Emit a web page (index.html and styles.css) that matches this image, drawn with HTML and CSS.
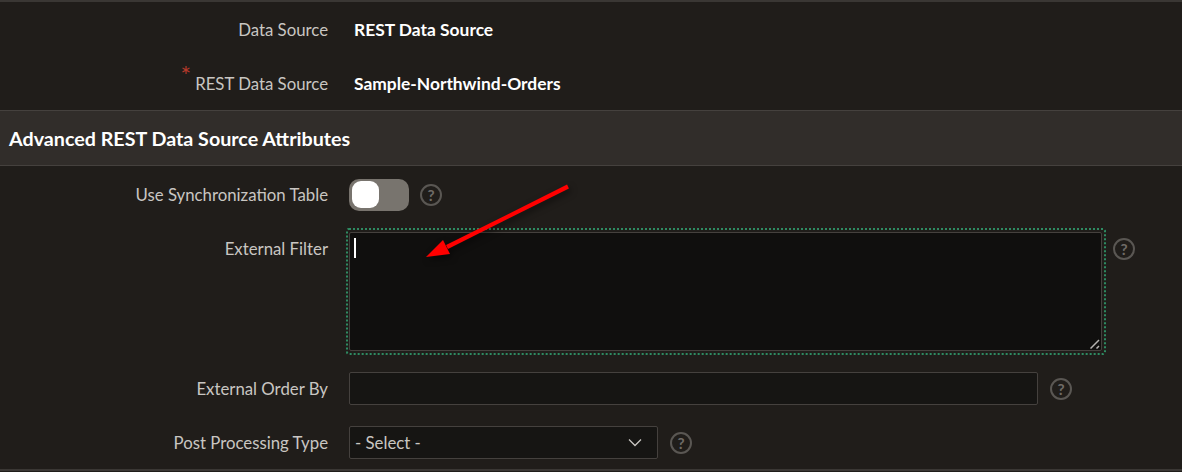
FILE: index.html
```html
<!DOCTYPE html>
<html lang="en">
<head>
<meta charset="utf-8">
<title>REST Data Source</title>
<link rel="stylesheet" href="styles.css">
</head>
<body>
<main class="page">
  <div class="row row-display row-first">
    <label class="label">Data Source</label>
    <div class="value">REST Data Source</div>
  </div>
  <div class="row row-display row-second">
    <label class="label"><span class="req">*</span>REST Data Source</label>
    <div class="value">Sample-Northwind-Orders</div>
  </div>
  <h2 class="section">Advanced REST Data Source Attributes</h2>
  <div class="row row-toggle">
    <label class="label">Use Synchronization Table</label>
    <div class="field">
      <span class="toggle"><span class="knob"></span></span>
      <span class="help">?</span>
    </div>
  </div>
  <div class="row row-area">
    <label class="label label-top">External Filter</label>
    <div class="field field-top">
      <div class="focus">
        <div class="textarea">
          <span class="caret"></span>
          <svg class="grip" width="10" height="10" viewBox="0 0 10 10"><path d="M0.5 9.5L9 1M6.5 9.5L9 7" stroke="#b5b3b0" stroke-width="1.5" fill="none"/></svg>
        </div>
      </div>
      <span class="help help-area">?</span>
    </div>
  </div>
  <div class="row row-order">
    <label class="label">External Order By</label>
    <div class="field">
      <div class="input"></div>
      <span class="help">?</span>
    </div>
  </div>
  <div class="row row-select">
    <label class="label">Post Processing Type</label>
    <div class="field">
      <div class="select">
        <span>- Select -</span>
        <svg width="14" height="9" viewBox="0 0 14 9"><path d="M1 1.5L7 7.5L13 1.5" stroke="#c9c6c2" stroke-width="1.3" fill="none"/></svg>
      </div>
      <span class="help">?</span>
    </div>
  </div>
  <svg class="arrow" width="160" height="90" viewBox="0 0 160 90">
    <path d="M148 6.5L27 67" stroke="#ff0000" stroke-width="4.2" fill="none"/>
    <path d="M6 77L23 60L30 74Z" fill="#ff0000"/>
  </svg>
</main>
</body>
</html>
```
FILE: styles.css
```css
* { box-sizing: border-box; }
html, body { margin: 0; padding: 0; height: 100%; }
body {
  background: #201d1a;
  color: #c9c6c2;
  font-family: Lato, "Noto Sans", sans-serif;
  font-size: 16.8px;
  overflow: hidden;
}
.page {
  position: relative;
  height: 472px;
  border-top: 2px solid #3a3734;
}
.row {
  display: grid;
  grid-template-columns: 328px 1fr;
  column-gap: 21px;
  align-items: center;
}
.row-first { height: 55px; }
.row-second { height: 53px; }
.row-toggle { height: 62px; padding-bottom: 4px; }
.row-area { height: 133px; align-items: start; }
.row-order { height: 54px; padding-top: 1px; }
.row-select {
  height: 56px;
  padding-top: 1px;
  border-bottom: 2px solid #3a3734;
}
.label {
  text-align: right;
  color: #c9c6c2;
  line-height: 20px;
  position: relative;
}
.label-top { padding-top: 11px; }
.req {
  color: #b5392a;
  font-size: 25px;
  line-height: 0;
  position: relative;
  top: -5px;
  margin-right: 4px;
}
.value {
  color: #fff;
  font-size: 17.4px;
  font-weight: 700;
  padding-left: 5px;
}
.section {
  margin: 0;
  height: 56px;
  padding: 1px 9px 0;
  display: flex;
  align-items: center;
  background: #312d2a;
  border-top: 1px solid #45413e;
  border-bottom: 1px solid #45413e;
  color: #fff;
  font-size: 19.7px;
  font-weight: 700;
}
.field {
  display: flex;
  align-items: center;
}
.field-top { align-items: flex-start; }
.toggle {
  width: 60px;
  height: 32px;
  border-radius: 10px;
  background: #78746e;
  padding: 2px 3px;
  margin-right: 11px;
  display: block;
}
.knob {
  display: block;
  width: 27px;
  height: 27px;
  border-radius: 9px;
  background: #fff;
}
.help {
  width: 22px;
  height: 22px;
  border: 2px solid #5a5753;
  border-radius: 50%;
  color: #6f6b67;
  font-size: 15.5px;
  font-weight: 700;
  line-height: 18px;
  text-align: center;
  flex: none;
}
.focus {
  width: 760px;
  height: 127px;
  margin-left: -3px;
  padding: 2px 2px 2px 1px;
  border: 2px dotted #2e8b62;
  border-radius: 3px;
}
.textarea {
  position: relative;
  height: 119px;
  background: #100f0e;
  border: 1px solid #45413e;
  border-radius: 2px;
}
.caret {
  position: absolute;
  left: 4px;
  top: 5px;
  width: 2px;
  height: 20px;
  background: #fff;
}
.grip {
  position: absolute;
  right: 1px;
  bottom: 1px;
}
.help-area { margin-left: 7px; margin-top: 10px; }
.input {
  width: 689px;
  height: 33px;
  background: #161513;
  border: 1px solid #45413e;
  border-radius: 2px;
  margin-right: 12px;
}
.select {
  width: 309px;
  height: 33px;
  background: #161513;
  border: 1px solid #45413e;
  border-radius: 2px;
  margin-right: 12px;
  padding: 0 15px 0 5px;
  display: flex;
  align-items: center;
  justify-content: space-between;
  color: #c9c6c2;
}
.arrow {
  position: absolute;
  left: 420px;
  top: 178px;
  filter: drop-shadow(2px 3px 3px rgba(0,0,0,.5));
}
```
